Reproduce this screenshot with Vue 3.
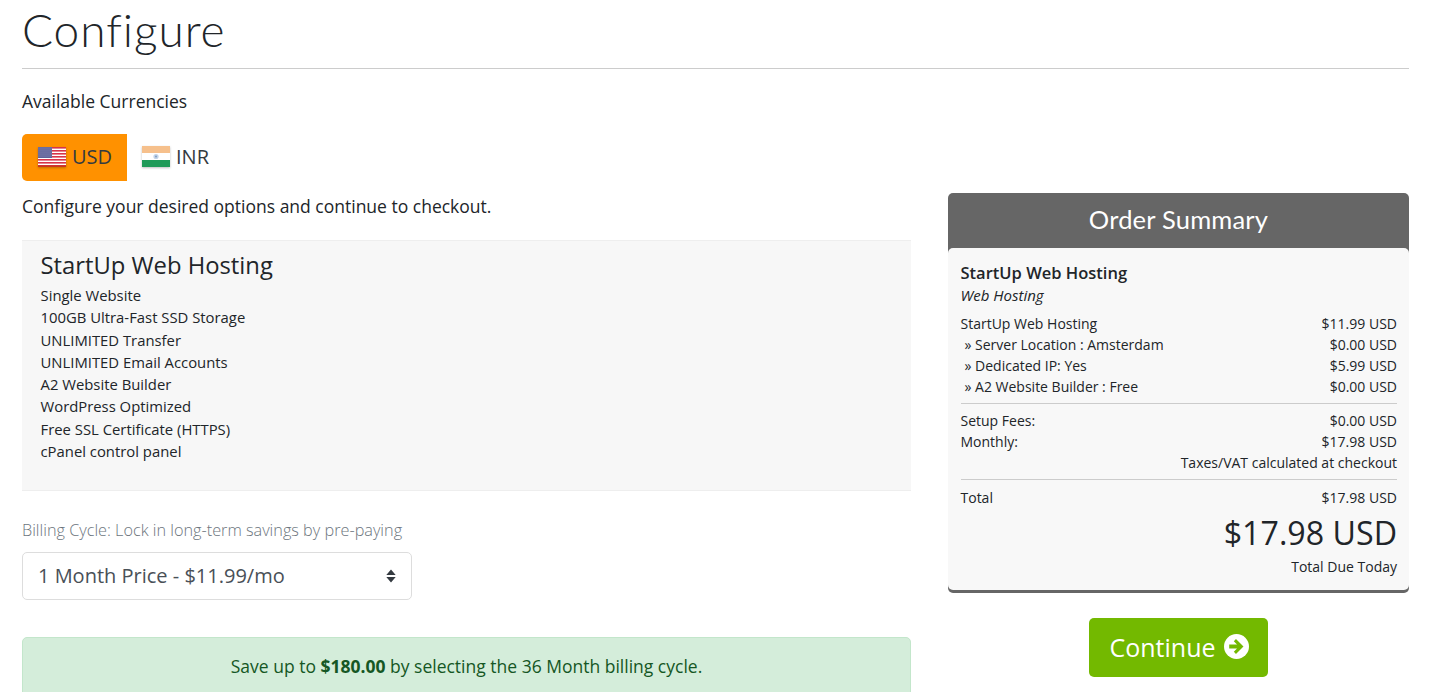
<script setup>
const features = ['Single Website','100GB Ultra-Fast SSD Storage','UNLIMITED Transfer','UNLIMITED Email Accounts','A2 Website Builder','WordPress Optimized','Free SSL Certificate (HTTPS)','cPanel control panel']
const lines = [
  ['StartUp Web Hosting','$11.99 USD',false],
  ['» Server Location : Amsterdam','$0.00 USD',true],
  ['» Dedicated IP: Yes','$5.99 USD',true],
  ['» A2 Website Builder : Free','$0.00 USD',true],
]
const stripes = [0,1,2,3,4,5,6]
const stars = []
for (let y = 1; y < 11; y += 2) for (let x = 1; x < 14; x += 2) stars.push([x, y])
</script>

<template>
  <div class="page">
    <h1 class="title">Configure</h1>
    <p class="avail">Available Currencies</p>
    <div class="currencies">
      <a class="cur active">
        <svg class="flag" width="28" height="20" viewBox="0 0 28 20">
          <rect width="28" height="20" fill="#fff"/>
          <rect v-for="i in stripes" :key="i" x="0" :y="i*3" width="28" height="1.6" fill="#d8344a"/>
          <rect width="14" height="11" fill="#5f6299"/>
          <circle v-for="s in stars" :key="s.join()" :cx="s[0]" :cy="s[1]" r=".45" fill="#c9cbe2"/>
          <rect y="18.4" width="28" height="1.6" fill="#c9361f"/>
        </svg>
        USD
      </a>
      <a class="cur second">
        <svg class="flag" width="28" height="21" viewBox="0 0 28 21">
          <rect width="28" height="7" fill="#f6c08c"/>
          <rect y="7" width="28" height="7" fill="#fff"/>
          <rect y="14" width="28" height="7" fill="#1f9a58"/>
          <circle cx="14" cy="10.5" r="2.6" fill="#c3d3e6"/>
          <circle cx="14" cy="10.5" r="1" fill="#7f9cc4"/>
        </svg>
        INR
      </a>
    </div>
    <div class="columns">
      <div class="left">
        <p class="intro">Configure your desired options and continue to checkout.</p>
        <div class="product">
          <div class="pname">StartUp Web Hosting</div>
          <div v-for="f in features" :key="f" class="feat">{{ f }}</div>
        </div>
        <label class="billing">Billing Cycle: Lock in long-term savings by pre-paying</label>
        <div class="select">
          <span>1 Month Price - $11.99/mo</span>
          <svg class="arrows" width="10" height="14" viewBox="0 0 10 14">
            <path d="M5 .5 9.7 6H.3zM5 13.5.3 8h9.4z" fill="#343a40"/>
          </svg>
        </div>
        <div class="alert">Save up to <b>$180.00</b> by selecting the 36 Month billing cycle.</div>
      </div>
      <div class="right">
        <div class="summary">
          <div class="shead">Order Summary</div>
          <div class="sbody">
            <div class="sname">StartUp Web Hosting</div>
            <div class="scat">Web Hosting</div>
            <div v-for="l in lines" :key="l[0]" class="row" :class="{ sub: l[2] }">
              <span>{{ l[0] }}</span><span>{{ l[1] }}</span>
            </div>
            <div class="sep"></div>
            <div class="row"><span>Setup Fees:</span><span>$0.00 USD</span></div>
            <div class="row"><span>Monthly:</span><span>$17.98 USD</span></div>
            <div class="tax">Taxes/VAT calculated at checkout</div>
            <div class="sep last"></div>
            <div class="row"><span>Total</span><span>$17.98 USD</span></div>
            <div class="big">$17.98 USD</div>
            <div class="due">Total Due Today</div>
          </div>
        </div>
        <div class="btnwrap">
          <a class="continue">Continue
            <svg width="25" height="25" viewBox="0 0 24 24">
              <circle cx="12" cy="12" r="12" fill="#fff"/>
              <path d="M5 10h7.5L9.4 6.9 11.5 4.8 18.7 12l-7.2 7.2-2.1-2.1 3.1-3.1H5z" fill="#73b900"/>
            </svg>
          </a>
        </div>
      </div>
    </div>
  </div>
</template>

<style>
html, body { margin: 0; height: 692px; overflow: hidden; background: #fff; }
</style>

<style scoped>
.page { padding: 0 45px 0 22px; height: 692px; overflow: hidden; box-sizing: border-box; font-family: "Open Sans", sans-serif; color: #212529; font-size: 16px; }
.title { margin: 0; height: 68px; border-bottom: 1px solid #ccc; font-family: Lato, sans-serif; font-weight: 300; font-size: 46px; line-height: 60px; color: #212529; letter-spacing: .95px; }
.avail { margin: 0; padding-top: 20px; height: 45px; line-height: 25px; font-size: 17.5px; }
.currencies { display: flex; height: 47px; }
.cur { display: flex; align-items: center; gap: 6px; padding: 0 0 2px 16px; font-size: 20px; color: #343a40; border-radius: 5px 0 0 5px; }
.cur.active { background: #ff9100; width: 105px; box-sizing: border-box; }
.cur.second { padding-left: 15px; gap: 6px; }
.flag { filter: drop-shadow(0 1px 1px rgba(0,0,0,.25)); }
.columns { display: flex; justify-content: space-between; }
.left { width: 889px; }
.right { width: 461px; padding-top: 12px; }
.intro { margin: 0; padding-top: 13px; height: 46px; line-height: 24px; font-size: 17.5px; }
.product { height: 242px; background: #f7f7f7; border-top: 1px solid #eee; border-bottom: 1px solid #eee; padding: 8px 18.5px 0; box-sizing: content-box; font-size: 14.85px; line-height: 22.3px; }
.product { height: 241px; }
.pname { font-size: 23.8px; line-height: 33px; margin-bottom: 2px; }
.billing { display: block; margin-top: 26px; font-size: 16.25px; font-weight: 300; line-height: 26px; color: #6c757d; }
.select { position: relative; margin-top: 9px; width: 390px; height: 48px; box-sizing: border-box; border: 1px solid #ddd; border-radius: 5px; padding-left: 15px; display: flex; align-items: center; padding-bottom: 1px; font-size: 20px; color: #495057; }
.arrows { position: absolute; right: 15px; top: 16px; }
.alert { margin-top: 37px; height: 60px; box-sizing: border-box; background: #d4edda; border: 1px solid #c3e6cb; border-radius: 5px; text-align: center; padding-top: 15px; line-height: 26px; font-size: 17.5px; color: #155724; }
.summary { background: #666; border-radius: 5px; padding-bottom: 3px; }
.shead { height: 55px; color: #fff; text-align: center; font-family: Lato, sans-serif; font-size: 25.5px; font-weight: 400; line-height: 53px; letter-spacing: .2px; }
.sbody { background: #f8f8f8; border-radius: 5px; padding: 14px 12px 12px 12.5px; font-size: 14px; line-height: 21px; }
.sname { font-size: 16.5px; font-weight: 600; line-height: 22px; }
.scat { font-style: italic; font-size: 15px; line-height: 23px; margin-bottom: 6px; }
.row { display: flex; justify-content: space-between; }
.row.sub { padding-left: 4px; }
.sep { border-top: 1px solid #ccc; margin: 6px 0 6px; }
.sep.last { margin-bottom: 7px; }
.tax { text-align: right; }
.big { text-align: right; font-size: 32.2px; line-height: 48px; margin: 1px 0 -1px; }
.due { text-align: right; line-height: 22px; }
.btnwrap { display: flex; justify-content: center; margin-top: 25px; }
.continue { display: flex; align-items: center; justify-content: center; gap: 8px; width: 179px; height: 59px; padding: 0 0 2px 1px; box-sizing: border-box; background: #73b900; color: #fff; border-radius: 5px; font-size: 25px; }
</style>
